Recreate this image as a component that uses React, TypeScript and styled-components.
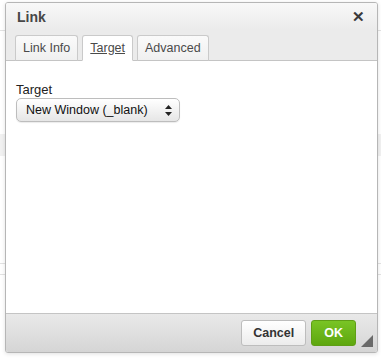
import React from 'react'
import styled, { createGlobalStyle } from 'styled-components'

const GlobalStyle = createGlobalStyle`
  html, body {
    margin: 0;
    padding: 0;
    background: #ffffff;
    font-family: "Liberation Sans", Arial, sans-serif;
  }
`

const Page = styled.div`
  position: relative;
  width: 381px;
  height: 358px;
  overflow: hidden;
  background: #fff;
`

// faint page content lying behind the dialog
const BackRow = styled.div<{ $h: number; $bg?: string; $line?: boolean }>`
  height: ${(p) => p.$h}px;
  background: ${(p) => p.$bg || 'transparent'};
  border-bottom: ${(p) => (p.$line ? '1px solid #e2e2e2' : 'none')};
`

const Dialog = styled.div`
  position: absolute;
  left: 5px;
  top: 2px;
  width: 371px;
  height: 349px;
  display: flex;
  flex-direction: column;
  border: 1px solid #b6b6b6;
  border-radius: 3px;
  background: #fff;
  box-shadow: 0 1px 4px rgba(0, 0, 0, 0.12);
  overflow: hidden;
`

const TitleBar = styled.div`
  height: 27px;
  display: flex;
  align-items: center;
  justify-content: space-between;
  padding: 0 12px 0 11px;
  background: linear-gradient(#f8f8f8, #ebebeb);
  color: #474747;
  font-weight: bold;
  font-size: 14px;
`

const Close = styled.span`
  font-size: 15px;
  font-weight: bold;
  color: #3a3a3a;
  line-height: 1;
`

const TabStrip = styled.div`
  height: 30px;
  display: flex;
  align-items: flex-end;
  gap: 4px;
  padding-left: 9px;
  background: #ebebeb;
  border-bottom: 1px solid #c4c4c4;
`

const Tab = styled.div<{ $active?: boolean }>`
  height: 24px;
  display: flex;
  align-items: center;
  padding: 0 7px;
  margin-bottom: -1px;
  border: 1px solid #cacaca;
  border-bottom: ${(p) => (p.$active ? '1px solid #fff' : '1px solid #c4c4c4')};
  border-radius: 3px 3px 0 0;
  background: ${(p) => (p.$active ? '#fff' : 'linear-gradient(#fafafa, #f0f0f0)')};
  color: #4a4a4a;
  font-size: 12.5px;
  text-decoration: ${(p) => (p.$active ? 'underline' : 'none')};
`

const Body = styled.div`
  flex: 1;
  padding: 22px 10px 0 10px;
  background: #fff;
`

const Label = styled.div`
  font-size: 13px;
  color: #222;
  margin-bottom: 1px;
  line-height: 14px;
`

const Select = styled.div`
  width: 146px;
  height: 22px;
  display: flex;
  align-items: center;
  justify-content: space-between;
  padding: 0 7px 0 9px;
  box-sizing: content-box;
  border: 1px solid #bdbdbd;
  border-radius: 5px;
  background: linear-gradient(#ffffff, #e6e6e6);
  box-shadow: 0 1px 1px rgba(0, 0, 0, 0.08);
  font-size: 12.5px;
  color: #111;
`

const Footer = styled.div`
  height: 38px;
  display: flex;
  align-items: center;
  justify-content: flex-end;
  gap: 5px;
  padding-right: 21px;
  position: relative;
  background: linear-gradient(#e9e9e9, #d5d5d5);
  border-top: 1px solid #c4c4c4;
`

const Button = styled.div<{ $primary?: boolean }>`
  height: 24px;
  display: flex;
  align-items: center;
  padding: 0 ${(p) => (p.$primary ? '12px' : '11px')};
  border-radius: 3px;
  font-size: 12.5px;
  font-weight: bold;
  border: 1px solid ${(p) => (p.$primary ? '#5f9e16' : '#bdbdbd')};
  background: ${(p) =>
    p.$primary ? 'linear-gradient(#79c425, #5ea70f)' : 'linear-gradient(#ffffff, #ececec)'};
  color: ${(p) => (p.$primary ? '#fff' : '#333')};
`

const Grip = styled.svg`
  position: absolute;
  right: 4px;
  bottom: 5px;
`

export default function App() {
  return (
    <>
      <GlobalStyle />
      <Page>
        <BackRow $h={30} $line />
        <BackRow $h={103} />
        <BackRow $h={22} $bg="#f1f1f1" />
        <BackRow $h={107} $line />
        <BackRow $h={10} $line />

        <Dialog>
          <TitleBar>
            <span>Link</span>
            <Close>✕</Close>
          </TitleBar>
          <TabStrip>
            <Tab>Link Info</Tab>
            <Tab $active>Target</Tab>
            <Tab>Advanced</Tab>
          </TabStrip>
          <Body>
            <Label>Target</Label>
            <Select>
              <span>New Window (_blank)</span>
              <svg width="7" height="11" viewBox="0 0 7 11">
                <path d="M3.5 0 L7 4 L0 4 Z" fill="#222" />
                <path d="M3.5 11 L7 7 L0 7 Z" fill="#222" />
              </svg>
            </Select>
          </Body>
          <Footer>
            <Button>Cancel</Button>
            <Button $primary>OK</Button>
            <Grip width="12" height="12" viewBox="0 0 12 12">
              <path d="M12 0 L12 12 L0 12 Z" fill="#6a6a6a" />
            </Grip>
          </Footer>
        </Dialog>
      </Page>
    </>
  )
}
